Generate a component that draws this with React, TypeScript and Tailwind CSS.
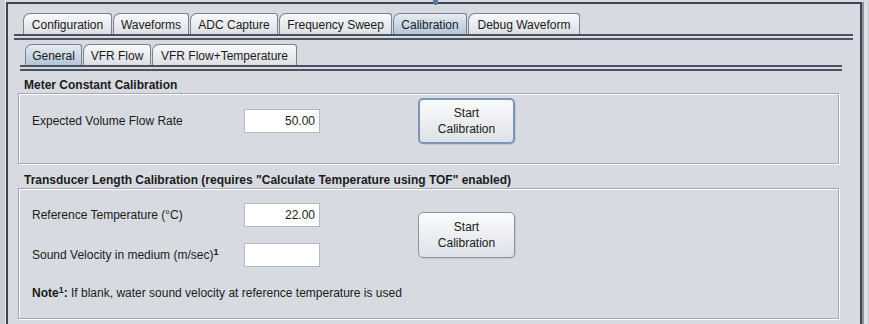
import type { ReactNode } from 'react'

const mainTabs = [
  { label: 'Configuration', w: 'w-[89px]' },
  { label: 'Waveforms', w: 'w-[76px]' },
  { label: 'ADC Capture', w: 'w-[88px]' },
  { label: 'Frequency Sweep', w: 'w-[113px]' },
  { label: 'Calibration', w: 'w-[74px]', active: true },
  { label: 'Debug Waveform', w: 'w-[112px]' },
]

const subTabs = [
  { label: 'General', w: 'w-[57px]', active: true },
  { label: 'VFR Flow', w: 'w-[68px]' },
  { label: 'VFR Flow+Temperature', w: 'w-[145px]' },
]

function Tab({ label, w, active }: { label: string; w: string; active?: boolean }) {
  return (
    <div
      className={`${w} flex h-[21px] shrink-0 items-center justify-center rounded-tl-[7px] rounded-tr-[3px] border border-b-0 border-[#7a828d] pt-[1px] text-[12px] leading-none text-[#1b1b1b] ${
        active
          ? 'bg-gradient-to-b from-[#e6ecf3] to-[#b3c5d8]'
          : 'bg-gradient-to-b from-[#f8f9fb] to-[#dcdfe4]'
      }`}
    >
      {label}
    </div>
  )
}

function TabLine({ className }: { className: string }) {
  return <div className={`h-[6px] border-t-2 border-b-2 border-[#4a5261] ${className}`} />
}

function StartButton({ focused }: { focused?: boolean }) {
  return (
    <button
      type="button"
      className={`flex h-[46px] w-[97px] shrink-0 flex-col items-center justify-center rounded-[5px] bg-gradient-to-b from-[#fbfbfc] to-[#dde1e7] text-[12px] leading-[16px] text-[#1b1b1b] shadow-[1px_1px_0_#c3c7ce] ${
        focused ? 'border-2 border-[#7a96b4]' : 'border border-[#8c929a]'
      }`}
    >
      <span>Start</span>
      <span>Calibration</span>
    </button>
  )
}

function Field({ value }: { value?: string }) {
  return (
    <div className="flex h-[24px] w-[76px] shrink-0 items-center justify-end border border-[#b6bbc3] bg-white pr-[4px] text-[12px] text-[#1b1b1b]">
      {value}
    </div>
  )
}

function Label({ children }: { children: ReactNode }) {
  return <div className="w-[212px] shrink-0 text-[12px] text-[#1b1b1b]">{children}</div>
}

function Panel({ className, children }: { className: string; children: ReactNode }) {
  return (
    <div
      className={`ml-[10px] w-[821px] border border-[#a4a9b1] shadow-[inset_1px_1px_0_#ffffff,1px_1px_0_#ffffff] ${className}`}
    >
      {children}
    </div>
  )
}

export default function App() {
  return (
    <div
      className="relative flex h-[324px] w-[869px] overflow-hidden bg-[#d7dae0] pt-[2px] text-[#1b1b1b]"
      style={{ fontFamily: '"Liberation Sans", Arial, sans-serif' }}
    >
      <div className="absolute left-[433px] top-0 h-[5px] w-[5px] rounded-b-[2px] bg-[#5f7896]" />

      <div className="-mt-[2px] w-[6px] shrink-0 border-r border-[#e3e6ea] bg-[#c9cdd4]" />

      <div className="flex w-[856px] shrink-0 flex-col border-t-2 border-l-2 border-r-2 border-[#3e4451] pt-[9px]">
        <div className="ml-[15px] flex gap-[1px]">
          {mainTabs.map((t) => (
            <Tab key={t.label} {...t} />
          ))}
        </div>
        <TabLine className="ml-[6px] w-[839px]" />

        <div className="ml-[17px] mt-[4px] flex gap-[1px]">
          {subTabs.map((t) => (
            <Tab key={t.label} {...t} />
          ))}
        </div>
        <TabLine className="ml-[12px] w-[822px]" />

        <div className="ml-[16px] mt-[7px] h-[14px] text-[12px] font-bold leading-[14px]">
          Meter Constant Calibration
        </div>
        <Panel className="mt-[1px] h-[71px] pl-[13px] pt-[4px]">
          <div className="flex items-center">
            <Label>Expected Volume Flow Rate</Label>
            <Field value="50.00" />
            <div className="ml-[98px]">
              <StartButton focused />
            </div>
          </div>
        </Panel>

        <div className="ml-[16px] mt-[9px] h-[14px] text-[12px] font-bold leading-[14px]">
          Transducer Length Calibration (requires "Calculate Temperature using TOF" enabled)
        </div>
        <Panel className="mt-[1px] h-[131px] pl-[13px] pt-[14px]">
          <div className="flex items-center">
            <div className="flex flex-col gap-[16px]">
              <div className="flex items-center">
                <Label>Reference Temperature (°C)</Label>
                <Field value="22.00" />
              </div>
              <div className="flex items-center">
                <Label>
                  Sound Velocity in medium (m/sec)<sup className="text-[9px] font-bold">1</sup>
                </Label>
                <Field />
              </div>
            </div>
            <div className="ml-[98px]">
              <StartButton />
            </div>
          </div>
          <div className="mt-[19px] text-[12px] leading-[14px]">
            <span className="font-bold">
              Note<sup className="text-[9px]">1</sup>:
            </span>{' '}
            If blank, water sound velocity at reference temperature is used
          </div>
        </Panel>
      </div>

      <div className="flex w-[7px] shrink-0">
        <div className="w-[2px] bg-[#9096a0]" />
        <div className="w-[4px] bg-[#dde0e5]" />
        <div className="w-[1px] bg-[#c4c8cf]" />
      </div>
    </div>
  )
}
